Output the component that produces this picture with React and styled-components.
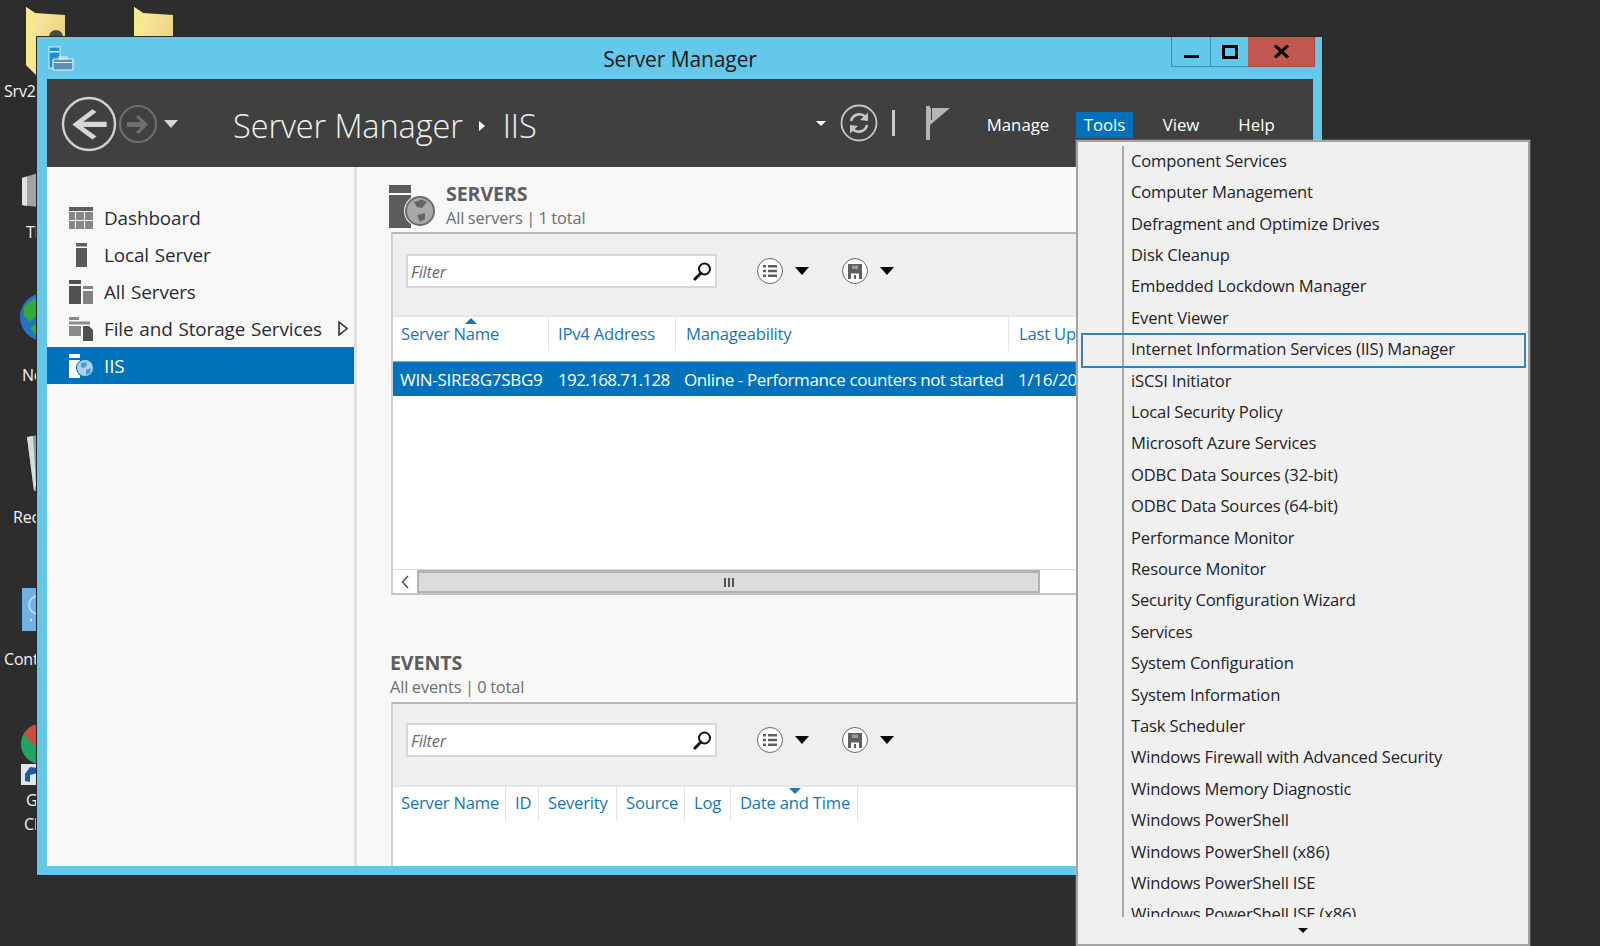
import React from "react";
import styled, { createGlobalStyle } from "styled-components";

const FONT = `"Open Sans", "Noto Sans", "Liberation Sans", sans-serif`;

const Global = createGlobalStyle`
  html, body { margin: 0; padding: 0; background: #2d2d2d; }
  * { box-sizing: border-box; }
`;

const Desktop = styled.div`
  position: relative;
  width: 1600px;
  height: 946px;
  overflow: hidden;
  background: #2d2d2d;
  font-family: ${FONT};
`;

const DesktopItem = styled.div`
  position: absolute;
  left: ${(p) => p.$x}px;
  top: ${(p) => p.$y}px;
  display: flex;
`;

const DesktopLabel = styled.span`
  position: absolute;
  left: ${(p) => p.$x}px;
  top: ${(p) => p.$y}px;
  color: #f4f4f4;
  font-size: 16px;
  line-height: 22px;
  letter-spacing: -0.2px;
  white-space: nowrap;
`;

const Window = styled.div`
  position: absolute;
  left: 37px;
  top: 37px;
  width: 1285px;
  height: 838px;
  padding: 0 9px 9px 10px;
  display: flex;
  flex-direction: column;
  background: #64c8ea;
  box-shadow: 0 0 0 1px #2f2523;
`;

const TitleBar = styled.div`
  height: 42px;
  flex: none;
  display: grid;
  grid-template-columns: 1fr auto 1fr;
`;

const AppIcon = styled.div`
  display: flex;
  align-items: flex-start;
  padding: 9px 0 0 1px;
`;

const WindowTitle = styled.div`
  font-size: 21px;
  line-height: 45px;
  color: #161616;
  letter-spacing: -0.1px;
`;

const Caption = styled.div`
  justify-self: end;
  display: flex;
  height: 30px;
  margin-right: -2px;
`;

const CaptionButton = styled.div`
  width: ${(p) => p.$w}px;
  height: 30px;
  display: flex;
  align-items: center;
  justify-content: center;
  background: ${(p) => (p.$close ? "#c0584f" : "#64c8ea")};
  border: 1px solid ${(p) => (p.$close ? "#a34a44" : "#3f8fa9")};
  border-top: none;
  border-left-width: ${(p) => (p.$close ? 0 : 1)}px;
  border-right-width: ${(p) => (p.$close ? 1 : 0)}px;
`;

const Header = styled.header`
  height: 88px;
  flex: none;
  display: flex;
  align-items: center;
  background: #404040;
  color: #fff;
`;

const NavCluster = styled.div`
  display: flex;
  align-items: center;
  padding: 1px 0 0 14px;
  width: 186px;
  flex: none;
`;

const NavForward = styled.span`
  margin-left: 1px;
  display: flex;
`;

const Breadcrumb = styled.div`
  display: flex;
  align-items: center;
  margin-top: 6px;
  font-weight: 300;
  font-size: 32.5px;
  line-height: 40px;
  color: #f2f2f2;
  letter-spacing: -0.1px;
`;

const CrumbSep = styled.span`
  width: 0;
  height: 0;
  margin: 0 18px 0 16px;
  border-left: 6px solid #fff;
  border-top: 5px solid transparent;
  border-bottom: 5px solid transparent;
`;

const Tools = styled.div`
  margin-left: auto;
  display: flex;
  align-items: center;
  padding-right: 30px;
`;

const Tri = styled.span`
  display: block;
  flex: none;
  width: 0;
  height: 0;
  margin: ${(p) => p.$m || 0};
  border-left: ${(p) => p.$w || 7}px solid transparent;
  border-right: ${(p) => p.$w || 7}px solid transparent;
  border-top: ${(p) => p.$h || 8}px solid ${(p) => p.$c || "#000"};
`;

const Pipe = styled.span`
  width: 3px;
  height: 26px;
  margin: 0 31px 0 14px;
  background: #c9c9c9;
`;

const MenuItem = styled.div`
  width: ${(p) => p.$w}px;
  margin-left: ${(p) => p.$ml || 0}px;
  height: 26px;
  display: flex;
  align-items: center;
  justify-content: center;
  font-size: 16.8px;
  color: #fff;
  background: ${(p) => (p.$on ? "#0072bc" : "transparent")};
  margin-top: 3px;
`;

const Body = styled.div`
  flex: 1;
  min-height: 0;
  display: flex;
  background: #f8f8f8;
`;

const Sidebar = styled.nav`
  width: 310px;
  flex: none;
  padding-top: 32px;
  border-right: 3px solid #e1e1e1;
`;

const SideRow = styled.div`
  height: 37px;
  padding: 0 6px 0 22px;
  display: flex;
  align-items: center;
  gap: 11px;
  font-size: 18.9px;
  letter-spacing: -0.1px;
  word-spacing: 1px;
  white-space: nowrap;
  color: ${(p) => (p.$on ? "#fff" : "#2b2b33")};
  background: ${(p) => (p.$on ? "#0072bc" : "transparent")};
`;

const SideIcon = styled.span`
  width: 24px;
  height: 28px;
  flex: none;
  display: flex;
  align-items: center;
  justify-content: center;
`;

const Caret = styled.span`
  margin-left: auto;
  width: 10px;
  height: 15px;
`;

const Main = styled.main`
  flex: 1;
  min-width: 0;
  overflow: hidden;
  padding: 18px 0 0 32px;
  display: flex;
  flex-direction: column;
`;

const SectionHead = styled.div`
  height: ${(p) => p.$h}px;
  flex: none;
  display: flex;
  gap: 11px;
  margin-top: ${(p) => p.$mt || 0}px;
`;

const HeadText = styled.div`
  margin-top: ${(p) => p.$mt || 0}px;
  margin-left: ${(p) => p.$ml || 0}px;
`;

const SectionTitle = styled.div`
  font-weight: 700;
  font-size: 19.6px;
  line-height: 24px;
  color: #5e5e5e;
  letter-spacing: -0.1px;
`;

const SectionSub = styled.div`
  font-size: 16.4px;
  line-height: 24px;
  color: #6e6e6e;
  letter-spacing: -0.12px;
  word-spacing: -0.6px;
`;

const Panel = styled.section`
  width: 760px;
  flex: ${(p) => (p.$fill ? 1 : "none")};
  height: ${(p) => (p.$fill ? "auto" : `${p.$h}px`)};
  margin-left: 2px;
  display: flex;
  flex-direction: column;
  background: #fff;
  border-top: 2px solid #b8b8b8;
  border-left: 2px solid #cfcfcf;
  border-bottom: ${(p) => (p.$fill ? "none" : "2px solid #c4c4c4")};
`;

const Toolbar = styled.div`
  height: ${(p) => p.$h}px;
  flex: none;
  padding: ${(p) => p.$pt}px 0 0 13px;
  display: flex;
  align-items: flex-start;
  background: #efefef;
  border-bottom: 2px solid #e6e6e6;
`;

const FilterBox = styled.div`
  width: 311px;
  height: 34px;
  flex: none;
  padding: 0 3px 0 3px;
  display: flex;
  align-items: center;
  justify-content: space-between;
  background: #fff;
  border: 2px solid #d8d8d8;
  font-style: italic;
  font-size: 16.4px;
  color: #6c6c6c;
  letter-spacing: -0.2px;
`;

const RoundButton = styled.span`
  width: 26px;
  height: 26px;
  margin: 4px 0 0 ${(p) => p.$ml}px;
  flex: none;
  display: flex;
  align-items: center;
  justify-content: center;
  background: #fff;
  border: 1.5px solid #6a6a6a;
  border-radius: 50%;
`;

const ColumnRow = styled.div`
  height: ${(p) => p.$h}px;
  flex: none;
  position: relative;
  display: flex;
`;

const Column = styled.div`
  width: ${(p) => p.$w}px;
  height: 34px;
  flex: none;
  padding: ${(p) => p.$pt}px 0 0 ${(p) => p.$pl}px;
  position: relative;
  white-space: nowrap;
  overflow: hidden;
  font-size: 16.6px;
  line-height: 24px;
  letter-spacing: -0.2px;
  color: #1a74bb;
  border-right: 1px solid ${(p) => (p.$end ? "transparent" : "#e6e6e6")};
`;

const SortMark = styled.span`
  position: absolute;
  left: ${(p) => p.$x}px;
  top: ${(p) => p.$y}px;
  width: 0;
  height: 0;
  border-left: 6px solid transparent;
  border-right: 6px solid transparent;
  ${(p) =>
    p.$down
      ? "border-top: 6px solid #1a74bb;"
      : "border-bottom: 6px solid #1a74bb;"}
`;

const DataRow = styled.div`
  height: 35px;
  flex: none;
  display: flex;
  background: #0072bc;
  border-top: 1px solid #7fb8dd;
`;

const Cell = styled.div`
  width: ${(p) => p.$w}px;
  flex: none;
  padding-left: ${(p) => p.$pl}px;
  white-space: nowrap;
  overflow: hidden;
  font-size: 17px;
  line-height: 35px;
  letter-spacing: ${(p) => p.$ls}px;
  color: #fff;
`;

const EmptyList = styled.div`
  flex: 1;
  background: #fff;
`;

const ScrollBar = styled.div`
  height: 24px;
  flex: none;
  display: flex;
  background: #fff;
  border-top: 1px solid #dcdcdc;
`;

const ScrollLeft = styled.div`
  width: 24px;
  flex: none;
  display: flex;
  align-items: center;
  justify-content: center;
  background: #fff;
`;

const ScrollThumb = styled.div`
  width: 623px;
  flex: none;
  display: flex;
  align-items: center;
  justify-content: center;
  gap: 2px;
  background: #dcdcdc;
  border: 2px solid #b2b2b2;
  border-top-width: 3px;
`;

const Grip = styled.span`
  width: 2px;
  height: 9px;
  background: #555;
`;

const Dropdown = styled.div`
  position: absolute;
  left: 1076px;
  top: 140px;
  width: 454px;
  height: 806px;
  padding-top: 4px;
  background: #f0f0f0;
  border: 2px solid #a3a3a3;
  box-shadow: 0 0 0 1px rgba(255, 255, 255, 0.15);
`;

const DropList = styled.ul`
  margin: 0 0 0 44px;
  padding: 0 0 0 7px;
  height: 771px;
  list-style: none;
  clip-path: inset(0 -100px 0 -100px);
  border-left: 2px solid #a8a8a8;
`;

const DropRow = styled.li`
  height: 31.42px;
  padding-bottom: 3px;
  position: relative;
  display: flex;
  align-items: center;
  font-size: 16.6px;
  color: #232328;
  letter-spacing: -0.17px;
  white-space: nowrap;
  ${(p) =>
    p.$hot &&
    `&::after {
      content: "";
      position: absolute;
      left: -50px;
      top: -1px;
      width: 441px;
      height: 31px;
      border: 2px solid #3d80b2;
      pointer-events: none;
    }`}
`;

const DropFoot = styled.div`
  display: flex;
  justify-content: center;
  padding-top: 11px;
`;

const Svg = ({ w, h, vb, children }) => (
  <svg width={w} height={h} viewBox={vb || `0 0 ${w} ${h}`} style={{ display: "block", flex: "none" }}>
    {children}
  </svg>
);

const BackIcon = () => (
  <Svg w={56} h={56}>
    <circle cx="28" cy="28" r="26" fill="none" stroke="#d0d0d0" strokeWidth="2.4" />
    <path d="M11.3 28.4 L31.3 13.3 L35.6 16 L22.3 25.7 L45.7 25.7 L45.7 31 L22.3 31 L35.6 40.6 L31.3 43.5 Z" fill="#d6d6d6" />
  </Svg>
);

const ForwardIcon = () => (
  <Svg w={40} h={40}>
    <circle cx="20" cy="20" r="18" fill="none" stroke="#6e6e6e" strokeWidth="2.2" />
    <path d="M30 20.5 L20.5 11 L18 13 L23 18 L9 18 L9 23 L23 23 L18 28 L20.5 30 Z" fill="#6e6e6e" />
  </Svg>
);

const RefreshIcon = () => (
  <Svg w={38} h={38}>
    <circle cx="19" cy="19" r="17.5" fill="none" stroke="#c6c6c6" strokeWidth="1.8" />
    <path d="M11 17 A8.5 8.5 0 0 1 25.5 13" fill="none" stroke="#c6c6c6" strokeWidth="2.6" />
    <path d="M28 8.5 L28 17 L20 16 Z" fill="#c6c6c6" />
    <path d="M27 21 A8.5 8.5 0 0 1 12.5 25" fill="none" stroke="#c6c6c6" strokeWidth="2.6" />
    <path d="M10 29.5 L10 21 L18 22 Z" fill="#c6c6c6" />
  </Svg>
);

const FlagIcon = () => (
  <Svg w={24} h={34}>
    <rect x="0" y="0" width="4" height="34" fill="#b5b5b5" />
    <path d="M4 2 L24 2 L4 19 Z" fill="#b5b5b5" />
    <rect x="5" y="2" width="1" height="12" fill="#404040" />
  </Svg>
);

const ServerToolIcon = () => (
  <Svg w={26} h={26}>
    <rect x="1" y="1" width="11" height="21" fill="#1d8fd6" stroke="#d7f0fa" strokeWidth="1" />
    <rect x="2" y="5" width="9" height="1.5" fill="#e6f6fc" />
    <rect x="5" y="13" width="20" height="11" rx="1" fill="#5d8fb3" stroke="#e2f3fa" strokeWidth="1.2" />
    <rect x="5.5" y="16" width="19" height="1" fill="#e2f3fa" />
    <rect x="11" y="11" width="8" height="2" fill="none" stroke="#e2f3fa" strokeWidth="1" />
  </Svg>
);

const DashboardIcon = () => (
  <Svg w={24} h={22}>
    <rect x="0" y="0" width="24" height="4" fill="#5f5f5f" />
    <path d="M0 5h6v8H0zM7 5h8v8H7zM16 5h8v8h-8zM0 14h6v8H0zM7 14h8v8H7zM16 14h8v8h-8z" fill="#858585" />
  </Svg>
);

const LocalIcon = () => (
  <Svg w={11} h={24}>
    <rect x="0" y="0" width="11" height="3.5" fill="#606060" />
    <rect x="0" y="5" width="11" height="19" fill="#5a5a5a" />
  </Svg>
);

const AllServersIcon = () => (
  <Svg w={24} h={24}>
    <rect x="0" y="0" width="12" height="4" fill="#505050" />
    <rect x="0" y="6" width="12" height="18" fill="#505050" />
    <rect x="14" y="6" width="10" height="3" fill="#828282" />
    <rect x="14" y="11" width="10" height="13" fill="#828282" />
  </Svg>
);

const StorageIcon = () => (
  <Svg w={24} h={24}>
    <path d="M0 0h10v3H0z" fill="#8a8a8a" />
    <path d="M0 4.5h21v3H0z" fill="#8a8a8a" />
    <path d="M0 9h12v10H0z" fill="#8a8a8a" />
    <path d="M14 9h6l4 4v11H14z" fill="#505050" />
  </Svg>
);

const IisSideIcon = () => (
  <Svg w={24} h={24}>
    <rect x="0" y="0" width="11" height="4" fill="#fff" />
    <rect x="0" y="6" width="11" height="18" fill="#fff" />
    <circle cx="16" cy="14" r="9" fill="#0072bc" />
    <circle cx="16" cy="14" r="8" fill="#a9d2ec" />
    <path d="M12 9 L17 8 L18 11 L15 14 L12 13 Z M17 16 L22 14 L21 19 L17 21 Z" fill="#4f9ad0" />
  </Svg>
);

const IisBigIcon = () => (
  <Svg w={46} h={43}>
    <rect x="0" y="0" width="22" height="8" fill="#5c5c5c" />
    <rect x="0" y="10" width="22" height="33" fill="#5c5c5c" />
    <circle cx="31" cy="26" r="16" fill="#f3f3f3" />
    <circle cx="31" cy="26" r="14" fill="#a9a9a9" stroke="#6c6c6c" strokeWidth="2" />
    <path d="M25 17 L33 14.5 L38 17 L33 23 L28 22 Z M28 30 L36 28 L36 34 L31 37 Z" fill="#666" />
  </Svg>
);

const SearchIcon = () => (
  <Svg w={19} h={19}>
    <circle cx="11.5" cy="7" r="5.5" fill="none" stroke="#111" strokeWidth="2" />
    <path d="M8 11 L2 17" stroke="#111" strokeWidth="3" strokeLinecap="round" />
  </Svg>
);

const ListIcon = () => (
  <Svg w={14} h={12}>
    <path d="M0 0h3v2.6H0zM5 0h9v2.6H5zM0 4.7h3v2.6H0zM5 4.7h9v2.6H5zM0 9.4h3V12H0zM5 9.4h9V12H5z" fill="#5f5f5f" />
  </Svg>
);

const SaveIcon = () => (
  <Svg w={14} h={15}>
    <path d="M0 0h14v15H0z" fill="#5f5f5f" />
    <rect x="4" y="1.5" width="6" height="3.5" fill="#9a9a9a" />
    <rect x="3" y="9.5" width="8" height="5.5" fill="#fff" />
    <rect x="6" y="11" width="2" height="4" fill="#5f5f5f" />
  </Svg>
);

const ChevronLeft = () => (
  <Svg w={8} h={14}>
    <path d="M7 1 L1.5 7 L7 13" fill="none" stroke="#555" strokeWidth="1.6" />
  </Svg>
);

const CaretOutline = () => (
  <Svg w={10} h={15}>
    <path d="M1 1 L9 7.5 L1 14 Z" fill="#fff" stroke="#333" strokeWidth="1.6" />
  </Svg>
);

const Folder = ({ badge }) => (
  <Svg w={40} h={70}>
    <defs>
      <linearGradient id="fold" x1="0" x2="1" y1="0" y2="1">
        <stop offset="0" stopColor="#fbeea9" />
        <stop offset="1" stopColor="#e8c769" />
      </linearGradient>
    </defs>
    <path d="M0 0 L9 6 L39 8 L39 69 L12 69 L0 58 Z" fill="url(#fold)" />
    <path d="M0 0 L9 6 L10 68 L0 58 Z" fill="#f7e78e" />
    {badge && <path d="M23 30 A7 7 0 0 1 37 30 L37 36 L23 36 Z" fill="#4a4a4a" />}
  </Svg>
);

const DriveIcon = () => (
  <Svg w={16} h={34}>
    <path d="M0 5 L16 0 L16 34 L0 32 Z" fill="#a3a3a3" />
    <path d="M0 5 L5 3.5 L5 33 L0 32 Z" fill="#e2e2e2" />
  </Svg>
);

const EarthIcon = () => (
  <Svg w={18} h={50}>
    <circle cx="24" cy="25" r="24" fill="#2673c4" />
    <path d="M4 14 L18 4 L18 22 L10 30 L4 24 Z" fill="#35a83a" />
    <path d="M10 36 L18 30 L18 46 Z" fill="#35a83a" />
  </Svg>
);

const BinIcon = () => (
  <Svg w={11} h={56}>
    <path d="M0 2 L11 0 L11 56 L7 56 Z" fill="#8f979e" />
    <path d="M0 2 L6 1 L9 50 L7 56 Z" fill="#d6dce0" />
  </Svg>
);

const PanelIcon = () => (
  <Svg w={16} h={43}>
    <rect x="0" y="0" width="16" height="43" fill="#6fb1e4" />
    <circle cx="16" cy="17" r="9" fill="none" stroke="#b9ddf5" strokeWidth="2" />
    <circle cx="9" cy="32" r="1.2" fill="#d7ecfb" />
  </Svg>
);

const ChromeIcon = () => (
  <Svg w={17} h={62}>
    <circle cx="20" cy="20" r="20" fill="#1fa463" />
    <path d="M20 0 A20 20 0 0 0 3 10 L13 22 L17 14 Z" fill="#c94f3d" />
    <rect x="-1" y="40" width="18" height="21" fill="#dfe6ee" />
    <path d="M17 44 L9 43 L4 50 L4 57 L9 58 L9 51 L17 49 Z" fill="#1f57a8" />
  </Svg>
);

const serverColumns = [
  { t: "Server Name", w: 156, pl: 8, cell: "WIN-SIRE8G7SBG9", cellPl: 7, ls: -0.3 },
  { t: "IPv4 Address", w: 127, pl: 9, cell: "192.168.71.128", cellPl: 9, ls: -0.62 },
  { t: "Manageability", w: 333, pl: 10, cell: "Online - Performance counters not started", cellPl: 8, ls: -0.4 },
  { t: "Last Update", w: 140, pl: 10, cell: "1/16/2017 5:21:04 PM", cellPl: 9, ls: -0.3, end: true },
];

const eventColumns = [
  { t: "Server Name", w: 113, pl: 8 },
  { t: "ID", w: 33, pl: 9 },
  { t: "Severity", w: 78, pl: 9 },
  { t: "Source", w: 68, pl: 9 },
  { t: "Log", w: 46, pl: 9 },
  { t: "Date and Time", w: 127, pl: 9 },
];

const sideItems = [
  { t: "Dashboard", icon: <DashboardIcon /> },
  { t: "Local Server", icon: <LocalIcon /> },
  { t: "All Servers", icon: <AllServersIcon /> },
  { t: "File and Storage Services", icon: <StorageIcon />, caret: true },
  { t: "IIS", icon: <IisSideIcon />, on: true },
];

const toolItems = [
  "Component Services",
  "Computer Management",
  "Defragment and Optimize Drives",
  "Disk Cleanup",
  "Embedded Lockdown Manager",
  "Event Viewer",
  "Internet Information Services (IIS) Manager",
  "iSCSI Initiator",
  "Local Security Policy",
  "Microsoft Azure Services",
  "ODBC Data Sources (32-bit)",
  "ODBC Data Sources (64-bit)",
  "Performance Monitor",
  "Resource Monitor",
  "Security Configuration Wizard",
  "Services",
  "System Configuration",
  "System Information",
  "Task Scheduler",
  "Windows Firewall with Advanced Security",
  "Windows Memory Diagnostic",
  "Windows PowerShell",
  "Windows PowerShell (x86)",
  "Windows PowerShell ISE",
  "Windows PowerShell ISE (x86)",
];

const TableTools = ({ pt, h }) => (
  <Toolbar $pt={pt} $h={h}>
    <FilterBox>
      Filter
      <SearchIcon />
    </FilterBox>
    <RoundButton $ml={40}>
      <ListIcon />
    </RoundButton>
    <Tri $m="13px 0 0 12px" />
    <RoundButton $ml={33}>
      <SaveIcon />
    </RoundButton>
    <Tri $m="13px 0 0 12px" />
  </Toolbar>
);

export default function App() {
  return (
    <Desktop>
      <Global />
      <DesktopItem $x={26} $y={7}><Folder badge /></DesktopItem>
      <DesktopItem $x={134} $y={7}><Folder /></DesktopItem>
      <DesktopItem $x={22} $y={173}><DriveIcon /></DesktopItem>
      <DesktopItem $x={20} $y={292}><EarthIcon /></DesktopItem>
      <DesktopItem $x={27} $y={435}><BinIcon /></DesktopItem>
      <DesktopItem $x={22} $y={588}><PanelIcon /></DesktopItem>
      <DesktopItem $x={21} $y={724}><ChromeIcon /></DesktopItem>
      <DesktopLabel $x={4} $y={80}>Srv2012</DesktopLabel>
      <DesktopLabel $x={26} $y={221}>This PC</DesktopLabel>
      <DesktopLabel $x={22} $y={364}>Network</DesktopLabel>
      <DesktopLabel $x={13} $y={506}>Recycle</DesktopLabel>
      <DesktopLabel $x={4} $y={648}>Control</DesktopLabel>
      <DesktopLabel $x={26} $y={789}>Google</DesktopLabel>
      <DesktopLabel $x={24} $y={813}>Chrome</DesktopLabel>

      <Window>
        <TitleBar>
          <AppIcon><ServerToolIcon /></AppIcon>
          <WindowTitle>Server Manager</WindowTitle>
          <Caption>
            <CaptionButton $w={39}>
              <Svg w={15} h={14}><rect x="0" y="10" width="15" height="3" fill="#000" /></Svg>
            </CaptionButton>
            <CaptionButton $w={38}>
              <Svg w={16} h={14}><rect x="1.5" y="1.5" width="13" height="11" fill="none" stroke="#000" strokeWidth="3" /></Svg>
            </CaptionButton>
            <CaptionButton $w={67} $close>
              <Svg w={15} h={13}><path d="M1 0.5 L14 12.5 M14 0.5 L1 12.5" stroke="#000" strokeWidth="3.2" /></Svg>
            </CaptionButton>
          </Caption>
        </TitleBar>

        <Header>
          <NavCluster>
            <BackIcon />
            <NavForward><ForwardIcon /></NavForward>
            <Tri $w={7} $h={8} $c="#d5d5d5" $m="0 0 0 6px" />
          </NavCluster>
          <Breadcrumb>
            Server Manager
            <CrumbSep />
            IIS
          </Breadcrumb>
          <Tools>
            <Tri $w={5} $h={5} $c="#fff" $m="0 14px 0 0" />
            <RefreshIcon />
            <Pipe />
            <FlagIcon />
            <MenuItem $w={80} $ml={28}>Manage</MenuItem>
            <MenuItem $w={57} $ml={18} $on>Tools</MenuItem>
            <MenuItem $w={56} $ml={20}>View</MenuItem>
            <MenuItem $w={53} $ml={21}>Help</MenuItem>
          </Tools>
        </Header>

        <Body>
          <Sidebar>
            {sideItems.map((s) => (
              <SideRow key={s.t} $on={s.on}>
                <SideIcon>{s.icon}</SideIcon>
                {s.t}
                {s.caret && <Caret><CaretOutline /></Caret>}
              </SideRow>
            ))}
          </Sidebar>
          <Main>
            <SectionHead $h={47}>
              <IisBigIcon />
              <HeadText $mt={-3}>
                <SectionTitle>SERVERS</SectionTitle>
                <SectionSub>All servers | 1 total</SectionSub>
              </HeadText>
            </SectionHead>
            <Panel $h={363}>
              <TableTools pt={20} h={83} />
              <ColumnRow $h={44}>
                {serverColumns.map((c) => (
                  <Column key={c.t} $w={c.w} $pl={c.pl} $pt={5} $end={c.end}>{c.t}</Column>
                ))}
                <SortMark $x={72} $y={1} />
              </ColumnRow>
              <DataRow>
                {serverColumns.map((c) => (
                  <Cell key={c.t} $w={c.w} $pl={c.cellPl} $ls={c.ls}>{c.cell}</Cell>
                ))}
              </DataRow>
              <EmptyList />
              <ScrollBar>
                <ScrollLeft><ChevronLeft /></ScrollLeft>
                <ScrollThumb><Grip /><Grip /><Grip /></ScrollThumb>
              </ScrollBar>
            </Panel>
            <SectionHead $h={51} $mt={56}>
              <HeadText $ml={1}>
                <SectionTitle>EVENTS</SectionTitle>
                <SectionSub>All events | 0 total</SectionSub>
              </HeadText>
            </SectionHead>
            <Panel $fill>
              <TableTools pt={19} h={83} />
              <ColumnRow $h={60}>
                {eventColumns.map((c) => (
                  <Column key={c.t} $w={c.w} $pl={c.pl} $pt={4}>{c.t}</Column>
                ))}
                <SortMark $x={396} $y={1} $down />
              </ColumnRow>
              <EmptyList />
            </Panel>
          </Main>
        </Body>
      </Window>

      <Dropdown>
        <DropList>
          {toolItems.map((t) => (
            <DropRow key={t} $hot={t.startsWith("Internet")}>{t}</DropRow>
          ))}
        </DropList>
        <DropFoot>
          <Tri $w={5} $h={5} $c="#000" />
        </DropFoot>
      </Dropdown>
    </Desktop>
  );
}
